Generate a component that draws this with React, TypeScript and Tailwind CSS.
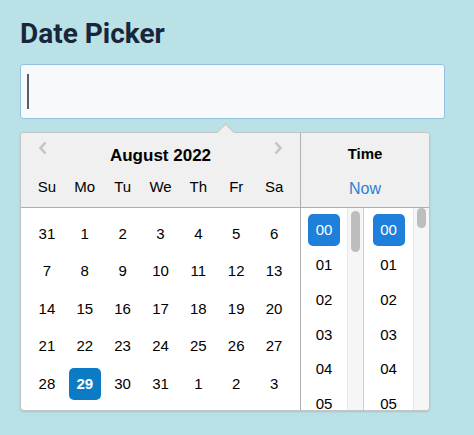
import React from 'react';

const dayNames = ['Su', 'Mo', 'Tu', 'We', 'Th', 'Fr', 'Sa'];

const weeks: number[][] = [
    [31, 1, 2, 3, 4, 5, 6],
    [7, 8, 9, 10, 11, 12, 13],
    [14, 15, 16, 17, 18, 19, 20],
    [21, 22, 23, 24, 25, 26, 27],
    [28, 29, 30, 31, 1, 2, 3],
];

const hours = ['00', '01', '02', '03', '04', '05'];

function Chevron({ dir }: { dir: 'left' | 'right' }) {
    return (
        <svg width="10" height="14" viewBox="0 0 10 14" className="-translate-y-[8px]">
            <path
                d={dir === 'left' ? 'M7.5 1.5 L2.5 7 L7.5 12.5' : 'M2.5 1.5 L7.5 7 L2.5 12.5'}
                fill="none"
                stroke="#c3c3c3"
                strokeWidth="2.6"
            />
        </svg>
    );
}

function TimeList({ width }: { width: string }) {
    return (
        <div className={`${width} shrink-0 pt-[5px] flex flex-col items-center`}>
            {hours.map((h, i) => (
                <div key={h} className="h-[34.8px] w-full flex items-center justify-center shrink-0">
                    {i === 0 ? (
                        <span className="w-[32px] h-[32px] rounded-[5px] bg-[#1f80dc] text-white text-[15px] flex items-center justify-center">
                            {h}
                        </span>
                    ) : (
                        <span className="text-[15px] text-black">{h}</span>
                    )}
                </div>
            ))}
        </div>
    );
}

export default function App() {
    return (
        <div className="min-h-screen bg-[#b9e1e6] pl-[20px] pt-[16px]">
            <h1 className="font-['Roboto',sans-serif] font-bold text-[28px] leading-[36px] text-[#17263b]">
                Date Picker
            </h1>

            <div className="mt-[12px] w-[425px] h-[55px] bg-[#f8f9fb] border border-[#92c2e3] rounded-[3px] flex items-center">
                <div className="ml-[6px] w-[2px] h-[35px] bg-[#5a5f66]" />
            </div>

            <div className="relative mt-[13px] w-[410px] h-[279px] flex border border-[#c4c4c4] rounded-[4px] bg-white shadow-[0_1px_2px_rgba(0,0,0,0.12)] font-['Liberation_Sans',Arial,sans-serif]">
                {/* little arrow pointing to the input */}
                <div className="absolute -top-[7px] left-[198px] w-[13px] h-[13px] rotate-45 bg-[#f0f0f0] border-l border-t border-[#c4c4c4]" />

                {/* calendar */}
                <div className="w-[279px] flex flex-col">
                    <div className="relative h-[75px] bg-[#f0f0f0] border-b border-[#aeaeae] rounded-tl-[4px] pt-[12px]">
                        <div className="flex items-center justify-between px-[17px] h-[22px]">
                            <Chevron dir="left" />
                            <span className="text-[17px] font-bold text-black leading-[22px]">August 2022</span>
                            <Chevron dir="right" />
                        </div>
                        <div className="grid grid-cols-7 px-[7px] mt-[10px] h-[20px]">
                            {dayNames.map((d) => (
                                <div key={d} className="text-center text-[15px] leading-[20px] text-black">
                                    {d}
                                </div>
                            ))}
                        </div>
                    </div>
                    <div className="px-[7px] pt-[7px]">
                        {weeks.map((week, wi) => (
                            <div key={wi} className="grid grid-cols-7 h-[37.5px]">
                                {week.map((day, di) => {
                                    const selected = wi === 4 && day === 29;
                                    return (
                                        <div key={di} className="flex items-center justify-center">
                                            {selected ? (
                                                <span className="w-[32px] h-[32px] rounded-[5px] bg-[#0c7bc6] text-white font-bold text-[15px] flex items-center justify-center">
                                                    {day}
                                                </span>
                                            ) : (
                                                <span className="text-[15px] text-black">{day}</span>
                                            )}
                                        </div>
                                    );
                                })}
                            </div>
                        ))}
                    </div>
                </div>

                {/* time */}
                <div className="flex-1 flex flex-col border-l border-[#aeaeae]">
                    <div className="h-[75px] bg-[#f0f0f0] border-b border-[#aeaeae] rounded-tr-[4px] pt-[11px] flex flex-col items-center">
                        <span className="h-[20px] leading-[20px] text-[15px] font-bold text-black">Time</span>
                        <span className="mt-[15px] h-[20px] leading-[20px] text-[16px] text-[#2f7fd1]">Now</span>
                    </div>
                    <div className="flex-1 flex overflow-hidden rounded-br-[4px]">
                        <TimeList width="w-[46px]" />
                        <div className="w-[16px] shrink-0 bg-[#f6f6f6] border-l border-[#e8e8e8] flex justify-center pt-[3px]">
                            <div className="w-[9px] h-[41px] rounded-full bg-[#bdbdbd]" />
                        </div>
                        <div className="border-l border-[#cdcdcd]" />
                        <TimeList width="w-[49px]" />
                        <div className="w-[16px] shrink-0 bg-[#f6f6f6] border-l border-[#e8e8e8] flex justify-center">
                            <div className="w-[9px] h-[20px] rounded-full bg-[#bdbdbd]" />
                        </div>
                    </div>
                </div>
            </div>
        </div>
    );
}
